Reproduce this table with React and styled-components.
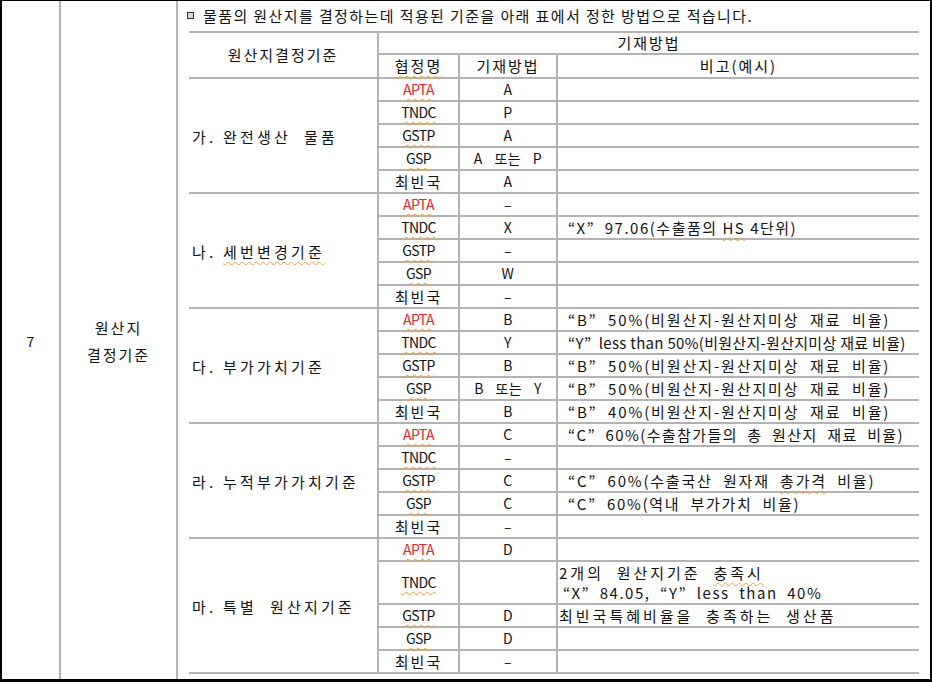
import React from 'react';
import styled, { createGlobalStyle } from 'styled-components';

const LINE = '#b3b3b3';

const GlobalStyle = createGlobalStyle`
  html, body {
    margin: 0;
    padding: 0;
    background: #ffffff;
  }
  body {
    font-family: "Noto Sans CJK KR", "Noto Sans", sans-serif;
    color: #111111;
  }
`;

// outer frame of the form row (item 7)
const Frame = styled.div`
  box-sizing: border-box;
  width: 932px;
  height: 682px;
  display: flex;
  border-left: 2px solid #000;
  border-top: 1px solid #000;
  border-right: 2px solid #000;
  border-bottom: 3px solid #000;
  overflow: hidden;
`;

const NumCell = styled.div`
  width: 57px;
  flex: none;
  display: flex;
  align-items: center;
  justify-content: center;
  border-right: 2px solid ${LINE};
  font-size: 14px;
  padding-top: 2px;
`;

const LabelCell = styled.div`
  width: 115px;
  flex: none;
  display: flex;
  flex-direction: column;
  align-items: center;
  justify-content: center;
  border-right: 2px solid ${LINE};
  font-size: 15px;
  letter-spacing: 2px;
  line-height: 27px;
  padding-top: 2px;
`;

const ContentCell = styled.div`
  flex: 1;
  display: flex;
  flex-direction: column;
  padding: 0 11px 0 9px;
`;

const Notice = styled.div`
  display: flex;
  align-items: center;
  gap: 9px;
  height: 30px;
  font-size: 15px;
  letter-spacing: 1.4px;
  word-spacing: 0;
  padding-bottom: 2px;
  box-sizing: border-box;
`;

const Bullet = styled.span`
  display: inline-block;
  width: 5px;
  height: 5px;
  border: 1px solid #333;
  background: #d8d8d8;
`;

const Sheet = styled.table`
  width: 730px;
  margin-left: 2px;
  border-collapse: collapse;
  table-layout: fixed;
  border-top: 2px solid ${LINE};
  border-bottom: 2px solid ${LINE};
`;

const Col = styled.col`
  width: ${(p) => p.$w}px;
`;

const Row = styled.tr`
  height: ${(p) => p.$h || 23}px;
`;

const Head = styled.th`
  font-weight: 400;
  font-size: 15px;
  letter-spacing: 2px;
  padding: 0;
  text-align: center;
  vertical-align: middle;
  border-bottom: 2px solid ${LINE};
  border-left: ${(p) => (p.$first ? 'none' : `2px solid ${LINE}`)};
  line-height: 18px;
`;

const Cell = styled.td`
  padding: 0;
  vertical-align: middle;
  white-space: pre;
  border-bottom: 2px solid ${LINE};
  border-left: ${(p) => (p.$first ? 'none' : `2px solid ${LINE}`)};
  line-height: 19px;
`;

const Section = styled(Cell)`
  font-size: 15px;
  letter-spacing: 3.2px;
  padding-left: 3px;
  padding-top: 1px;
`;

const Pact = styled(Cell)`
  text-align: center;
  font-size: ${(p) => (p.$latin ? 14 : 15)}px;
  letter-spacing: ${(p) => (p.$latin ? '-0.6px' : '2px')};
  color: ${(p) => (p.$red ? '#e3262b' : '#111')};
`;

const Method = styled(Cell)`
  text-align: center;
  font-size: 14px;
  letter-spacing: 0.5px;
  word-spacing: 8px;
`;

const Note = styled(Cell)`
  font-size: 15px;
  letter-spacing: ${(p) => p.$ls}px;
  padding-left: ${(p) => (p.$indent ? 10 : 1)}px;
  line-height: 20px;
`;

const NoteLine = styled.div`
  padding-left: ${(p) => p.$pad || 0}px;
  letter-spacing: ${(p) => p.$ls}px;
`;

// spell-check squiggle as seen in the source editor
const Squiggle = styled.span`
  text-decoration: underline wavy #f0a03a;
  text-decoration-thickness: 1px;
  text-underline-offset: 3px;
`;

const pacts = ['APTA', 'TNDC', 'GSTP', 'GSP', '최빈국'];

const sections = [
  {
    title: '가. 완전생산  물품',
    methods: ['A', 'P', 'A', 'A 또는 P', 'A'],
    notes: [null, null, null, null, null],
  },
  {
    title: (
      <>
        나. <Squiggle>세번변경기준</Squiggle>
      </>
    ),
    methods: ['–', 'X', '–', 'W', '–'],
    notes: [
      null,
      {
        ls: 1.5,
        text: (
          <>
            “X”  97.06(수출품의 <Squiggle>HS</Squiggle> 4단위)
          </>
        ),
      },
      null,
      null,
      null,
    ],
  },
  {
    title: '다. 부가가치기준',
    methods: ['B', 'Y', 'B', 'B 또는 Y', 'B'],
    notes: [
      { ls: 1.9, text: '“B”  50%(비원산지-원산지미상  재료  비율)' },
      { ls: 0.3, text: '“Y”  less than 50%(비원산지-원산지미상 재료 비율)' },
      { ls: 1.9, text: '“B”  50%(비원산지-원산지미상  재료  비율)' },
      { ls: 1.9, text: '“B”  50%(비원산지-원산지미상  재료  비율)' },
      { ls: 1.9, text: '“B”  40%(비원산지-원산지미상  재료  비율)' },
    ],
  },
  {
    title: '라. 누적부가가치기준',
    methods: ['C', '–', 'C', 'C', '–'],
    notes: [
      { ls: 1.4, text: '“C”  60%(수출참가들의  총  원산지  재료  비율)' },
      null,
      {
        ls: 1.8,
        text: (
          <>
            “C”  60%(수출국산  원자재  <Squiggle>총가격</Squiggle>  비율)
          </>
        ),
      },
      { ls: 1.7, text: '“C”  60%(역내  부가가치  비율)' },
      null,
    ],
  },
  {
    title: '마. 특별  원산지기준',
    methods: ['D', '', 'D', 'D', '–'],
    notes: [
      null,
      {
        flat: true,
        text: (
          <>
            <NoteLine $ls={3}>
              2개의  원산지기준  <Squiggle>충족시</Squiggle>
            </NoteLine>
            <NoteLine $pad={4} $ls={1.5}>
              “X”  84.05,  “Y”  less  than  40%
            </NoteLine>
          </>
        ),
      },
      { ls: 3, flat: true, text: '최빈국특혜비율을  충족하는  생산품' },
      null,
      null,
    ],
    tall: 1,
  },
];

const PactName = ({ name }) => {
  if (name === '최빈국') return <Pact>{name}</Pact>;
  return (
    <Pact $latin $red={name === 'APTA'}>
      <Squiggle>{name}</Squiggle>
    </Pact>
  );
};

const NoteCell = ({ note }) => {
  if (!note) return <Note $indent $ls={0} />;
  return (
    <Note $indent={!note.flat} $ls={note.ls || 0}>
      {note.text}
    </Note>
  );
};

const SectionRows = ({ section }) =>
  pacts.map((pact, i) => (
    <Row key={pact} $h={section.tall === i ? 43 : 23}>
      {i === 0 && (
        <Section $first rowSpan={5}>
          {section.title}
        </Section>
      )}
      <PactName name={pact} />
      <Method>{section.methods[i]}</Method>
      <NoteCell note={section.notes[i]} />
    </Row>
  ));

export default function App() {
  return (
    <>
      <GlobalStyle />
      <Frame>
        <NumCell>7</NumCell>
        <LabelCell>
          <span>원산지</span>
          <span>결정기준</span>
        </LabelCell>
        <ContentCell>
          <Notice>
            <Bullet />
            <span>물품의 원산지를 결정하는데 적용된 기준을 아래 표에서 정한 방법으로 적습니다.</span>
          </Notice>
          <Sheet>
            <colgroup>
              <Col $w={189} />
              <Col $w={81} />
              <Col $w={98} />
              <Col $w={362} />
            </colgroup>
            <thead>
              <Row $h={22}>
                <Head $first rowSpan={2}>
                  원산지결정기준
                </Head>
                <Head colSpan={3}>기재방법</Head>
              </Row>
              <Row $h={24}>
                <Head>
                  <Squiggle>협정명</Squiggle>
                </Head>
                <Head>기재방법</Head>
                <Head>비고(예시)</Head>
              </Row>
            </thead>
            <tbody>
              {sections.map((s, i) => (
                <SectionRows key={i} section={s} />
              ))}
            </tbody>
          </Sheet>
        </ContentCell>
      </Frame>
    </>
  );
}
